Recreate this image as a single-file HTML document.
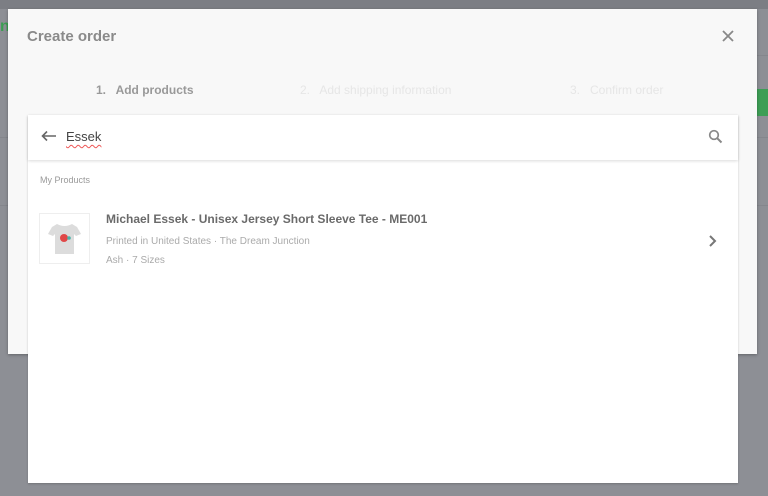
<!DOCTYPE html>
<html><head><meta charset="utf-8"><style>
*{margin:0;padding:0;box-sizing:border-box}
body{width:768px;height:496px;overflow:hidden;background:#8d8f95;font-family:"Liberation Sans",Arial,sans-serif;position:relative}
.topbar{position:absolute;left:0;top:0;width:768px;height:9px;background:#7c7e84}
.bgl{position:absolute;background:#84868c;height:1px}
.modal{position:absolute;left:8px;top:9px;width:749px;height:345px;background:#f8f8f8;box-shadow:0 1px 3px rgba(0,0,0,.3)}
.title{position:absolute;left:19px;top:19px;font-size:15px;color:#8a8a8a;font-weight:bold}
.close{position:absolute;left:713px;top:20px}
.step{position:absolute;top:74px;font-size:12px;color:#e6e6e6}
.panel{position:absolute;left:28px;top:115px;width:710px;height:368px;background:#fff;box-shadow:0 1px 2px rgba(0,0,0,.2)}
.search{position:absolute;left:0;top:0;width:710px;height:45px;background:#fff;box-shadow:0 1px 3px rgba(0,0,0,.15)}
.q{position:absolute;left:38px;top:14px;font-size:13px;color:#444;text-decoration:underline wavy #e55;text-decoration-thickness:1px;text-underline-offset:3px}
.lbl{position:absolute;left:12px;top:60px;font-size:9px;color:#999}
.thumb{position:absolute;left:11px;top:98px;width:51px;height:51px;border:1px solid #eee}
.name{position:absolute;left:78px;top:97px;font-size:12px;color:#6a6a6a;font-weight:bold}
.sub{position:absolute;left:78px;font-size:10px;color:#aaa}
</style></head><body>
<div class="topbar"></div>
<div style="position:absolute;left:0;top:18px;width:8px;height:20px;color:#3b9f52;font-weight:bold;font-size:16px">n</div>
<div style="position:absolute;left:757px;top:89px;width:11px;height:27px;background:#3d9e55"></div>
<div class="bgl" style="left:757px;top:55px;width:11px"></div>
<div class="bgl" style="left:757px;top:137px;width:11px"></div>
<div class="bgl" style="left:757px;top:205px;width:11px"></div>
<div class="bgl" style="left:0;top:137px;width:8px"></div>
<div class="bgl" style="left:0;top:205px;width:8px"></div>
<div class="modal">
<div class="title">Create order</div>
<svg class="close" width="14" height="14" viewBox="0 0 14 14"><path d="M2 2L12 12M12 2L2 12" stroke="#888" stroke-width="1.8"/></svg>
<div class="step" style="left:88px;color:#999;font-weight:bold">1.&nbsp;&nbsp; Add products</div>
<div class="step" style="left:292px">2.&nbsp;&nbsp; Add shipping information</div>
<div class="step" style="left:562px">3.&nbsp;&nbsp; Confirm order</div>
</div>
<div class="panel">
<div class="search">
<svg style="position:absolute;left:13px;top:15px" width="16" height="12" viewBox="0 0 16 12"><path d="M15 6H2M6 1.5L1.5 6L6 10.5" stroke="#666" stroke-width="1.6" fill="none"/></svg>
<div class="q">Essek</div>
<svg style="position:absolute;left:680px;top:14px" width="15" height="15" viewBox="0 0 15 15"><circle cx="6" cy="6" r="4.3" stroke="#888" stroke-width="1.7" fill="none"/><path d="M9.2 9.2L13.5 13.5" stroke="#888" stroke-width="2"/></svg>
</div>
<div class="lbl">My Products</div>
<div class="thumb"><svg width="49" height="49" viewBox="0 0 49 49"><path d="M17 10L12 13L8 20L13 22L15 20L15 40L34 40L34 20L36 22L41 20L37 13L32 10Q24.5 14 17 10Z" fill="#dcdcdc"/><circle cx="24" cy="24" r="4" fill="#e04848"/><circle cx="29" cy="24" r="1.8" fill="#4bb3a8"/></svg></div>
<div class="name">Michael Essek - Unisex Jersey Short Sleeve Tee - ME001</div>
<div class="sub" style="top:121px">Printed in United States · The Dream Junction</div>
<div class="sub" style="top:140px">Ash · 7 Sizes</div>
<svg style="position:absolute;left:680px;top:119px" width="10" height="14" viewBox="0 0 10 14"><path d="M2 2L7 7L2 12" stroke="#777" stroke-width="2" fill="none"/></svg>
</div>
</body></html>
